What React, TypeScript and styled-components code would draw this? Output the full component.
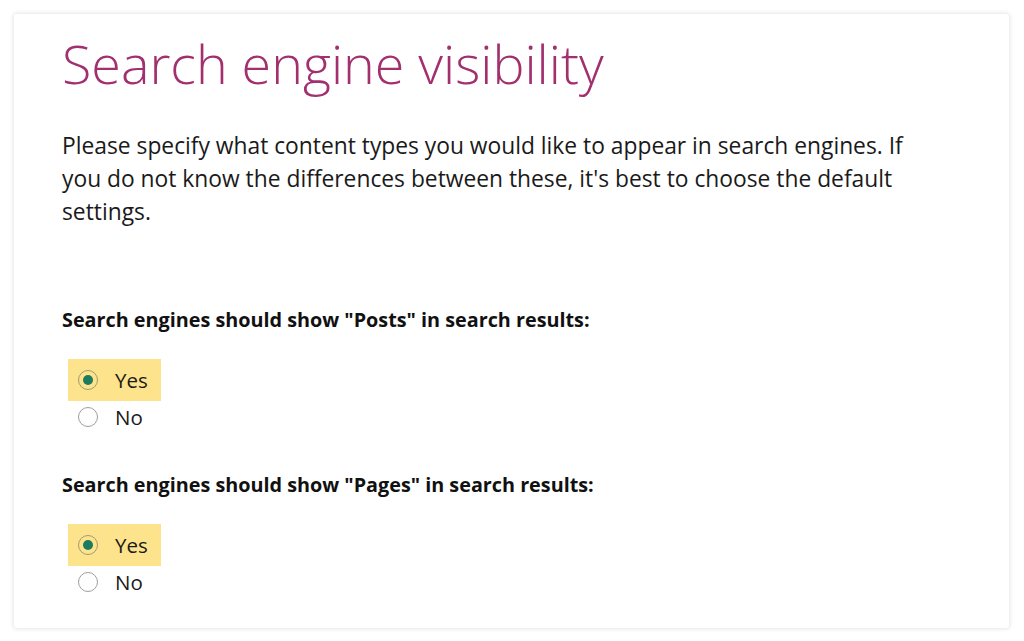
import React from "react";
import styled, { createGlobalStyle } from "styled-components";

const Global = createGlobalStyle`
  html, body { margin: 0; padding: 0; background: #ffffff; }
  body { font-family: "Open Sans", "Noto Sans", sans-serif; }
`;

const Page = styled.div`
  padding: 14px 15px 13px 14px;
  box-sizing: border-box;
  width: 1024px;
  height: 641px;
`;

const Card = styled.div`
  background: #fff;
  height: 100%;
  box-sizing: border-box;
  border-radius: 3px;
  box-shadow: 0 0 4px 1px rgba(0, 0, 0, 0.1);
  padding: 13px 48px 0 48px;
  display: flex;
  flex-direction: column;
`;

const Title = styled.h1`
  margin: 0;
  font-weight: 300;
  font-size: 53.8px;
  line-height: 72px;
  color: #a3306e;
`;

const Intro = styled.p`
  margin: 30px 0 0 0;
  font-size: 22.8px;
  line-height: 33px;
  color: #1a1a1a;
  max-width: 860px;
`;

const Section = styled.div<{ $top: number }>`
  display: flex;
  flex-direction: column;
  margin-top: ${(p) => p.$top}px;
`;

const Label = styled.div`
  font-weight: 700;
  font-size: 19.8px;
  line-height: 24px;
  color: #111;
`;

const Options = styled.div`
  display: flex;
  flex-direction: column;
  align-items: flex-start;
  margin-top: 27px;
`;

const Option = styled.label<{ $on?: boolean }>`
  display: flex;
  align-items: center;
  gap: 17px;
  height: ${(p) => (p.$on ? 42 : 32)}px;
  padding: 0 13px 0 10px;
  margin-left: 6px;
  background: ${(p) => (p.$on ? "#fde38b" : "transparent")};
  font-size: 20.5px;
  color: #1a1a1a;
`;

const Radio = styled.span<{ $on?: boolean }>`
  width: 20px;
  height: 20px;
  border-radius: 50%;
  box-sizing: border-box;
  border: 1.5px solid ${(p) => (p.$on ? "#a39a6e" : "#9e9e9e")};
  background: ${(p) => (p.$on ? "transparent" : "#fff")};
  display: flex;
  align-items: center;
  justify-content: center;
  &::after {
    content: "";
    width: 10px;
    height: 10px;
    border-radius: 50%;
    background: ${(p) => (p.$on ? "#1c7a5e" : "transparent")};
  }
`;

function Group({ label, top }: { label: string; top: number }) {
  return (
    <Section $top={top}>
      <Label>{label}</Label>
      <Options>
        <Option $on>
          <Radio $on />
          Yes
        </Option>
        <Option>
          <Radio />
          No
        </Option>
      </Options>
    </Section>
  );
}

export default function App() {
  return (
    <>
      <Global />
      <Page>
        <Card>
          <Title>Search engine visibility</Title>
          <Intro>
            Please specify what content types you would like to appear in search engines. If
            you do not know the differences between these, it's best to choose the default
            settings.
          </Intro>
          <Group top={80} label={'Search engines should show "Posts" in search results:'} />
          <Group top={40} label={'Search engines should show "Pages" in search results:'} />
        </Card>
      </Page>
    </>
  );
}
